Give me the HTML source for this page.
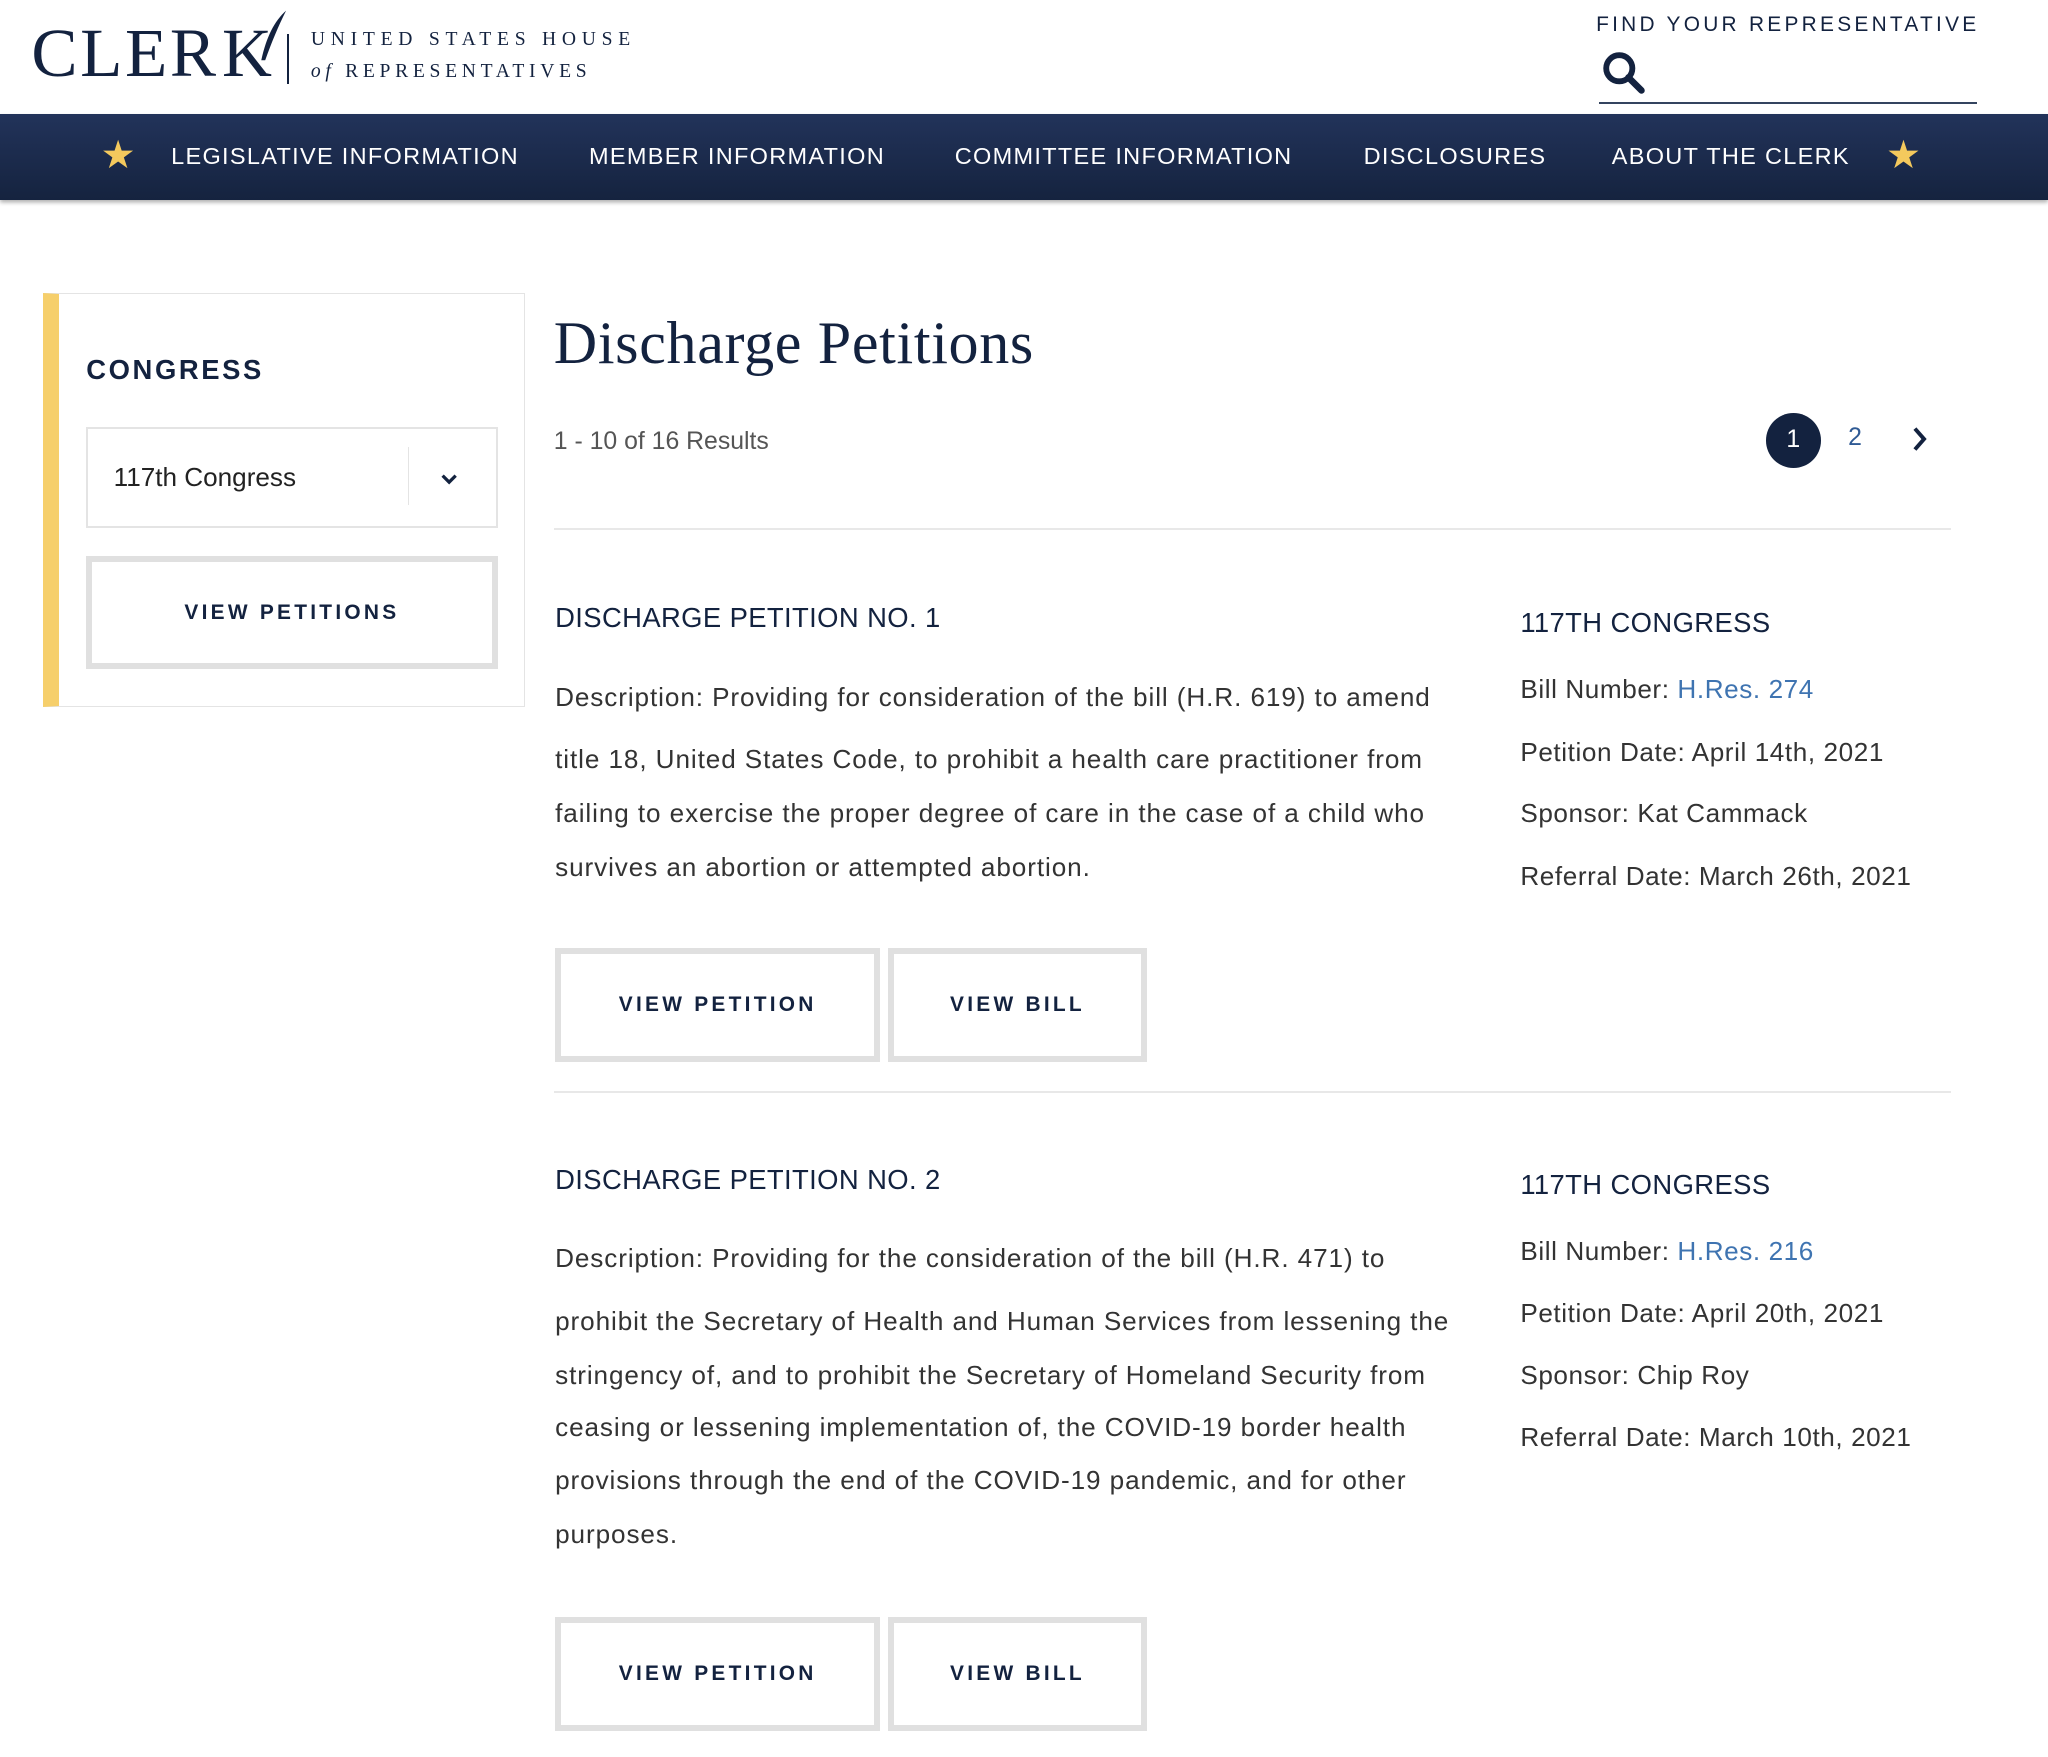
<!DOCTYPE html>
<html><head><meta charset="utf-8"><style>
html,body{margin:0;padding:0;background:#fff}
body{zoom:1.30612;width:1568px;height:1345px;position:relative;overflow:hidden;font-family:"Liberation Sans",sans-serif;color:#333}
.a{position:absolute;white-space:nowrap}
.nav{position:absolute;left:0;top:87px;width:1568px;height:66px;background:linear-gradient(#22335a,#15233f);box-shadow:0 2px 3px rgba(0,0,0,.3)}
.ni{position:absolute;top:22px;color:#fff;font-size:18px;letter-spacing:1px;line-height:22px}
.star{position:absolute;top:17px;color:#f4c95d;font-size:30px;line-height:30px}
.btn{position:absolute;border:5px solid #e0e0e0;box-sizing:border-box;background:#fff;color:#13223f;font-weight:bold;font-size:16px;letter-spacing:2.5px;display:flex;align-items:center;justify-content:center}
.h3{color:#13223f;font-size:21px;letter-spacing:.3px}
.d{font-size:20px;color:#333;letter-spacing:.7px}
.r{font-size:20px;color:#333;letter-spacing:.45px}
.lnk{color:#3f74b1}
.hr{position:absolute;left:424px;width:1070px;height:2px;background:#e8e8e8}
</style></head><body>
<div class="a" style="left:24px;top:10px;font-family:'Liberation Serif',serif;font-size:53px;color:#13223f;letter-spacing:2px;line-height:62px">CLER</div>
<div class="a" style="left:170px;top:10px;font-family:'Liberation Serif',serif;font-size:53px;color:#13223f;line-height:62px">K</div>
<svg class="a" style="left:186px;top:6px" width="36" height="60"><path d="M33 2 C24 10 18 22 14 40 L17 40 C22 26 27 14 33 2Z" fill="#13223f"/></svg>
<div class="a" style="left:220px;top:26px;width:1px;height:38px;background:#13223f"></div>
<div class="a" style="left:238px;top:22px;font-family:'Liberation Serif',serif;font-size:15px;letter-spacing:4.4px;color:#13223f">UNITED STATES HOUSE</div>
<div class="a" style="left:238px;top:47px;font-family:'Liberation Serif',serif;font-size:15px;letter-spacing:3.6px;color:#13223f"><i>of</i> REPRESENTATIVES</div>
<div class="a" style="left:1222px;top:10px;font-size:16px;letter-spacing:2.5px;color:#13223f">FIND YOUR REPRESENTATIVE</div>
<svg class="a" style="left:1226px;top:38px" width="36" height="34"><circle cx="14" cy="14" r="10" fill="none" stroke="#13223f" stroke-width="4.5"/><path d="M21 21 L31 31" stroke="#13223f" stroke-width="5" stroke-linecap="round"/></svg>
<div class="a" style="left:1224px;top:78px;width:290px;height:2px;background:#34445f"></div>
<div class="nav">
<div class="star" style="left:77px">★</div>
<div class="ni" style="left:131px">LEGISLATIVE INFORMATION</div>
<div class="ni" style="left:451px">MEMBER INFORMATION</div>
<div class="ni" style="left:731px">COMMITTEE INFORMATION</div>
<div class="ni" style="left:1044px">DISCLOSURES</div>
<div class="ni" style="left:1234px">ABOUT THE CLERK</div>
<div class="star" style="left:1444px">★</div>
</div>
<div class="a" style="left:33px;top:224px;width:369px;height:317px;border:1px solid #e4e4e4;box-sizing:border-box;border-left:13px solid #f6cf6b"></div>
<div class="a" style="left:66px;top:271px;font-size:21px;font-weight:bold;letter-spacing:2px;color:#13223f">CONGRESS</div>
<div class="a" style="left:66px;top:327px;width:315px;height:77px;border:2px solid #e4e4e4;box-sizing:border-box"></div>
<div class="a" style="left:87px;top:354px;font-size:20px;color:#222">117th Congress</div>
<div class="a" style="left:312px;top:342px;width:1px;height:45px;background:#e4e4e4"></div>
<svg class="a" style="left:337px;top:362px" width="14" height="10"><path d="M2 2 L7 7 L12 2" fill="none" stroke="#13223f" stroke-width="2.5"/></svg>
<div class="btn" style="left:66px;top:426px;width:315px;height:86px">VIEW PETITIONS</div>
<div class="a" style="left:424px;top:236px;font-family:'Liberation Serif',serif;font-size:46px;color:#13223f;letter-spacing:.5px">Discharge Petitions</div>
<div class="a" style="left:424px;top:328px;font-size:19px;color:#555">1 - 10 of 16 Results</div>
<div class="a" style="left:1352px;top:316px;width:42px;height:42px;border-radius:50%;background:#13223f;color:#fff;font-size:19px;text-align:center;line-height:42px">1</div>
<div class="a" style="left:1415px;top:325px;font-size:19px;color:#2f5a94">2</div>
<svg class="a" style="left:1463px;top:326px" width="14" height="20"><path d="M3 2 L10 10 L3 18" fill="none" stroke="#13223f" stroke-width="3"/></svg>
<div class="hr" style="top:404px"></div>

<div class="a h3" style="left:425px;top:461px">DISCHARGE PETITION NO. 1</div>
<div class="a d" style="left:425px;top:522px">Description: Providing for consideration of the bill (H.R. 619) to amend</div>
<div class="a d" style="left:425px;top:570px">title 18, United States Code, to prohibit a health care practitioner from</div>
<div class="a d" style="left:425px;top:611px">failing to exercise the proper degree of care in the case of a child who</div>
<div class="a d" style="left:425px;top:652px">survives an abortion or attempted abortion.</div>
<div class="a h3" style="left:1164px;top:465px">117TH CONGRESS</div>
<div class="a r" style="left:1164px;top:516px">Bill Number: <span class="lnk">H.Res. 274</span></div>
<div class="a r" style="left:1164px;top:564px">Petition Date: April 14th, 2021</div>
<div class="a r" style="left:1164px;top:611px">Sponsor: Kat Cammack</div>
<div class="a r" style="left:1164px;top:659px">Referral Date: March 26th, 2021</div>
<div class="btn" style="left:425px;top:726px;width:249px;height:87px">VIEW PETITION</div>
<div class="btn" style="left:680px;top:726px;width:198px;height:87px">VIEW BILL</div>
<div class="hr" style="top:835px"></div>

<div class="a h3" style="left:425px;top:891px">DISCHARGE PETITION NO. 2</div>
<div class="a d" style="left:425px;top:952px">Description: Providing for the consideration of the bill (H.R. 471) to</div>
<div class="a d" style="left:425px;top:1000px">prohibit the Secretary of Health and Human Services from lessening the</div>
<div class="a d" style="left:425px;top:1041px">stringency of, and to prohibit the Secretary of Homeland Security from</div>
<div class="a d" style="left:425px;top:1081px">ceasing or lessening implementation of, the COVID-19 border health</div>
<div class="a d" style="left:425px;top:1122px">provisions through the end of the COVID-19 pandemic, and for other</div>
<div class="a d" style="left:425px;top:1163px">purposes.</div>
<div class="a h3" style="left:1164px;top:895px">117TH CONGRESS</div>
<div class="a r" style="left:1164px;top:946px">Bill Number: <span class="lnk">H.Res. 216</span></div>
<div class="a r" style="left:1164px;top:994px">Petition Date: April 20th, 2021</div>
<div class="a r" style="left:1164px;top:1041px">Sponsor: Chip Roy</div>
<div class="a r" style="left:1164px;top:1089px">Referral Date: March 10th, 2021</div>
<div class="btn" style="left:425px;top:1238px;width:249px;height:87px">VIEW PETITION</div>
<div class="btn" style="left:680px;top:1238px;width:198px;height:87px">VIEW BILL</div>
</body></html>
